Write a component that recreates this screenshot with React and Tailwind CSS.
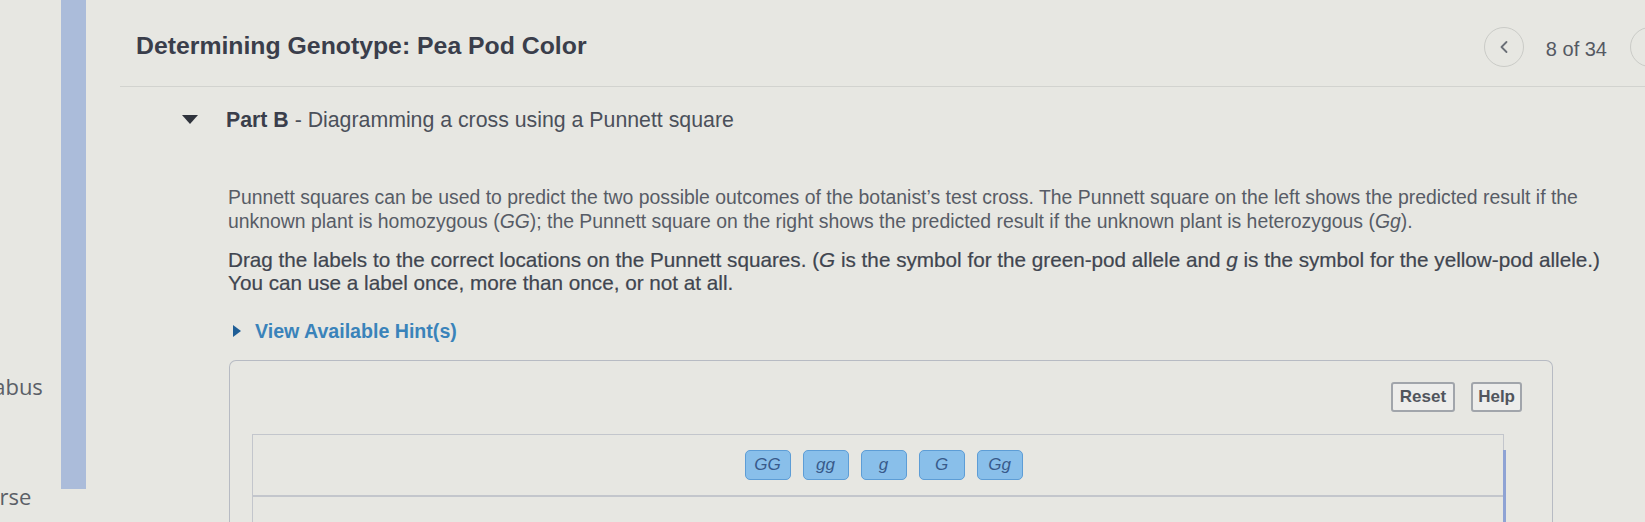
import { ChevronLeft } from 'lucide-react';

const labels = ['GG', 'gg', 'g', 'G', 'Gg'];

function Sidebar() {
  return (
    <div className="flex h-full w-[120px] shrink-0">
      <div className="w-[47px] overflow-hidden shrink-0">
        <div className="ml-[-41px] font-['Open_Sans',sans-serif] text-[22px] text-[#5b5f67] whitespace-nowrap">
          <div className="mt-[370px] leading-[32px]">Syllabus</div>
          <div className="mt-[78px] leading-[32px]">Course</div>
        </div>
      </div>
      <div className="ml-[14px] w-[25px] h-[489px] bg-[#abbcda]" />
    </div>
  );
}

function Header() {
  return (
    <div className="flex items-center justify-between h-[87px] border-b border-[#d2d3cf] pl-[16px]">
      <h1 className="text-[24.8px] font-bold text-[#3a3e4b] mt-[5px]">Determining Genotype: Pea Pod Color</h1>
      <div className="flex items-center pt-[8px] mr-[-25px]">
        <button className="w-[40px] h-[40px] rounded-full border border-[#cacbc7] flex items-center justify-center text-[#6b6f77]">
          <ChevronLeft size={20} strokeWidth={2.2} />
        </button>
        <span className="ml-[22px] text-[20px] text-[#555962] leading-none mt-[4px]">8 of 34</span>
        <div className="ml-[23px] w-[40px] h-[40px] rounded-full border border-[#cacbc7]" />
      </div>
    </div>
  );
}

function Workspace() {
  return (
    <div className="ml-[1px] w-[1324px] h-[200px] border border-b-0 border-[#b7bbc3] rounded-t-[7px] pl-[22px]">
      <div className="flex justify-end gap-[16px] pt-[21px] pr-[30px]">
        <button className="h-[30px] px-[7px] border-2 border-[#a1a5ab] rounded-[3px] bg-[#ededeb] text-[17px] font-bold text-[#51555d]">Reset</button>
        <button className="h-[30px] px-[5px] border-2 border-[#a1a5ab] rounded-[3px] bg-[#ededeb] text-[17px] font-bold text-[#51555d]">Help</button>
      </div>
      <div className="mt-[22px] mr-[46px] flex h-[130px]">
        <div className="flex-1 border-t border-l border-[#c3c6cc]">
          <div className="h-[62px] border-b-2 border-[#c3c6cc] flex items-center justify-center gap-[12px] pl-[11px]">
            {labels.map(l => (
              <div key={l} className="w-[46px] h-[30px] rounded-[5px] border border-[#5d9dd6] bg-[#89bfea] flex items-center justify-center italic text-[17px] text-[#385a8a]">
                {l}
              </div>
            ))}
          </div>
        </div>
        <div className="flex flex-col w-[3px]">
          <div className="h-[16px] w-px bg-[#c3c6cc]" />
          <div className="flex-1 w-[3px] bg-[#8fa3d4]" />
        </div>
      </div>
    </div>
  );
}

export default function App() {
  return (
    <div className="w-[1645px] h-[522px] overflow-hidden bg-[#e7e7e2] flex font-['Liberation_Sans',Arial,sans-serif]">
      <Sidebar />
      <div className="flex-1 min-w-0">
        <Header />
        <div className="pl-[62px]">
          <div className="flex items-center pt-[19px] h-[47px]">
            <span className="w-0 h-0 border-l-[8px] border-r-[8px] border-t-[9px] border-l-transparent border-r-transparent border-t-[#2f333c] mt-[-1px]" />
            <h2 className="ml-[28px] text-[21.3px] leading-[28px] text-[#4b505a]">
              <span className="font-bold text-[#3a3e4b]">Part B</span> - Diagramming a cross using a Punnett square
            </h2>
          </div>
          <div className="pl-[46px]">
            <p className="mt-[51px] text-[19.4px] leading-[24px] text-[#575c66] whitespace-nowrap">
              Punnett squares can be used to predict the two possible outcomes of the botanist’s test cross. The Punnett square on the left shows the predicted result if the<br />
              unknown plant is homozygous (<i>GG</i>); the Punnett square on the right shows the predicted result if the unknown plant is heterozygous (<i>Gg</i>).
            </p>
            <p className="mt-[15px] text-[20.7px] leading-[23px] text-[#40454f] whitespace-nowrap [-webkit-text-stroke:0.2px_#40454f]">
              Drag the labels to the correct locations on the Punnett squares. (<i>G</i> is the symbol for the green-pod allele and <i>g</i> is the symbol for the yellow-pod allele.)<br />
              You can use a label once, more than once, or not at all.
            </p>
            <div className="flex items-center mt-[25px] ml-[5px]">
              <span className="w-0 h-0 border-t-[6px] border-b-[6px] border-l-[8px] border-t-transparent border-b-transparent border-l-[#1f5e96]" />
              <span className="ml-[14px] text-[19.6px] font-bold text-[#3a83ba] leading-[24px]">View Available Hint(s)</span>
            </div>
            <div className="mt-[17px]">
              <Workspace />
            </div>
          </div>
        </div>
      </div>
    </div>
  );
}
